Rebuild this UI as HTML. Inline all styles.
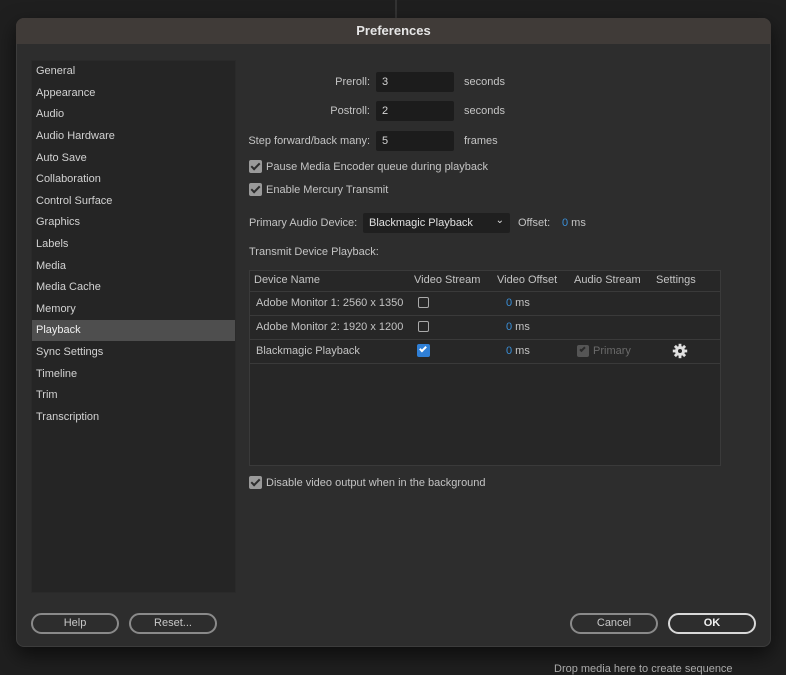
<!DOCTYPE html><html><head><style>
*{margin:0;padding:0;box-sizing:border-box}
body{width:786px;height:672px;background:#1f1f1f;font-family:"Liberation Sans",sans-serif;font-size:11px;color:#c4c4c4;position:relative;overflow:hidden}
.a{position:absolute;white-space:nowrap}
.dlg{position:absolute;left:16px;top:18px;width:755px;height:629px;background:#2d2d2d;border-radius:8px;border:1px solid #3c3c3c;box-shadow:0 8px 20px rgba(0,0,0,.6)}
.tb{position:absolute;left:16px;top:18px;width:755px;height:26px;background:#403b38;border-radius:8px 8px 0 0;text-align:center;line-height:26px;font-weight:bold;font-size:13px;color:#e6e6e6}
.side{position:absolute;left:31px;top:60px;width:205px;height:533px;background:#252525;border:1px solid #2a2a2a}
.si{position:absolute;left:36px;font-size:11px;color:#d2d2d2}
.inp{position:absolute;background:#1c1c1c;width:78px;height:20px;border-radius:2px;padding-left:6px;line-height:20px;color:#d4d4d4}
.cb{position:absolute;width:13px;height:13px;border-radius:2px;background:#9a9a9a}
.cb:after{content:"";position:absolute;left:4px;top:1px;width:3px;height:7px;border:solid #2d2d2d;border-width:0 2px 2px 0;transform:rotate(45deg)}
.ecb{position:absolute;width:11px;height:11px;border:1.5px solid #aaa;border-radius:2px}
.btn{position:absolute;height:21px;width:88px;border:2px solid #8a8a8a;border-radius:11px;text-align:center;line-height:17px;color:#c8c8c8}
.blue{color:#3a8fd8}
.hl{position:absolute;left:250px;width:470px;height:1px;background:#3a3a3a}
</style></head><body>
<div class="a" style="left:395px;top:0;width:2px;height:18px;background:#333"></div>
<div class="dlg"></div>
<div class="tb">Preferences</div>
<div class="side"></div>
<div class="a" style="left:32px;top:320px;width:203px;height:21px;background:#4e4e4e"></div>
<div class="si a" style="top:65px">General</div>
<div class="si a" style="top:87px">Appearance</div>
<div class="si a" style="top:108px">Audio</div>
<div class="si a" style="top:130px">Audio Hardware</div>
<div class="si a" style="top:152px">Auto Save</div>
<div class="si a" style="top:173px">Collaboration</div>
<div class="si a" style="top:195px">Control Surface</div>
<div class="si a" style="top:216px">Graphics</div>
<div class="si a" style="top:238px">Labels</div>
<div class="si a" style="top:260px">Media</div>
<div class="si a" style="top:281px">Media Cache</div>
<div class="si a" style="top:303px">Memory</div>
<div class="si a" style="top:324px;color:#eee">Playback</div>
<div class="si a" style="top:346px">Sync Settings</div>
<div class="si a" style="top:368px">Timeline</div>
<div class="si a" style="top:389px">Trim</div>
<div class="si a" style="top:411px">Transcription</div>

<div class="a" style="right:416px;top:76px">Preroll:</div>
<div class="inp" style="left:376px;top:72px">3</div>
<div class="a" style="left:464px;top:76px">seconds</div>
<div class="a" style="right:416px;top:105px">Postroll:</div>
<div class="inp" style="left:376px;top:101px">2</div>
<div class="a" style="left:464px;top:105px">seconds</div>
<div class="a" style="right:416px;top:135px">Step forward/back many:</div>
<div class="inp" style="left:376px;top:131px">5</div>
<div class="a" style="left:464px;top:135px">frames</div>
<div class="cb" style="left:249px;top:160px"></div>
<div class="a" style="left:266px;top:161px">Pause Media Encoder queue during playback</div>
<div class="cb" style="left:249px;top:183px"></div>
<div class="a" style="left:266px;top:184px">Enable Mercury Transmit</div>
<div class="a" style="left:249px;top:217px">Primary Audio Device:</div>
<div class="a" style="left:363px;top:213px;width:147px;height:20px;background:#1f1f1f;border-radius:2px;padding-left:6px;line-height:20px;color:#e0e0e0">Blackmagic Playback<span style="position:absolute;right:6px;top:-2px;font-size:10px">&#8964;</span></div>
<div class="a" style="left:518px;top:217px">Offset:</div>
<div class="a" style="left:562px;top:217px"><span class="blue">0</span> ms</div>
<div class="a" style="left:249px;top:246px">Transmit Device Playback:</div>

<div class="a" style="left:249px;top:270px;width:472px;height:196px;background:#272727;border:1px solid #3a3a3a"></div>
<div class="hl" style="top:291px"></div>
<div class="hl" style="top:315px"></div>
<div class="hl" style="top:339px"></div>
<div class="hl" style="top:363px"></div>
<div class="a" style="left:254px;top:274px">Device Name</div>
<div class="a" style="left:414px;top:274px">Video Stream</div>
<div class="a" style="left:497px;top:274px">Video Offset</div>
<div class="a" style="left:574px;top:274px">Audio Stream</div>
<div class="a" style="left:656px;top:274px">Settings</div>

<div class="a" style="left:256px;top:297px">Adobe Monitor 1: 2560 x 1350</div>
<div class="ecb" style="left:418px;top:297px"></div>
<div class="a" style="left:506px;top:297px"><span class="blue">0</span> ms</div>

<div class="a" style="left:256px;top:321px">Adobe Monitor 2: 1920 x 1200</div>
<div class="ecb" style="left:418px;top:321px"></div>
<div class="a" style="left:506px;top:321px"><span class="blue">0</span> ms</div>

<div class="a" style="left:256px;top:345px">Blackmagic Playback</div>
<div class="a" style="left:417px;top:344px;width:13px;height:13px;border-radius:2px;background:#2f7fd6"><div style="position:absolute;left:4px;top:1px;width:4px;height:7px;border:solid #fff;border-width:0 2px 2px 0;transform:rotate(45deg)"></div></div>
<div class="a" style="left:506px;top:345px"><span class="blue">0</span> ms</div>
<div class="a" style="left:577px;top:345px;width:12px;height:12px;border-radius:2px;background:#555"><div style="position:absolute;left:4px;top:1px;width:3px;height:6px;border:solid #2a2a2a;border-width:0 2px 2px 0;transform:rotate(45deg)"></div></div>
<div class="a" style="left:593px;top:345px;color:#6a6a6a">Primary</div>
<svg class="a" style="left:672px;top:343px" width="16" height="16" viewBox="0 0 16 16"><g fill="#e0e0e0"><circle cx="8" cy="8" r="5"/><g id="t"><rect x="6.6" y="0.8" width="2.8" height="3.5"/><rect x="6.6" y="11.7" width="2.8" height="3.5"/></g><use href="#t" transform="rotate(45 8 8)"/><use href="#t" transform="rotate(90 8 8)"/><use href="#t" transform="rotate(135 8 8)"/></g><circle cx="8" cy="8" r="2" fill="#272727"/></svg>

<div class="cb" style="left:249px;top:476px"></div>
<div class="a" style="left:266px;top:477px">Disable video output when in the background</div>

<div class="btn" style="left:31px;top:613px">Help</div>
<div class="btn" style="left:129px;top:613px">Reset...</div>
<div class="btn" style="left:570px;top:613px">Cancel</div>
<div class="btn" style="left:668px;top:613px;border-color:#d8d8d8;color:#f0f0f0;font-weight:bold">OK</div>
<div class="a" style="left:554px;top:663px;color:#aaa">Drop media here to create sequence</div>
</body></html>
